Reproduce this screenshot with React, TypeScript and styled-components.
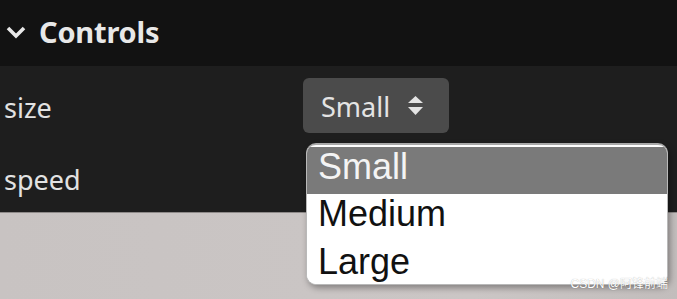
import React from "react";
import styled, { createGlobalStyle } from "styled-components";

const GlobalStyle = createGlobalStyle`
  html, body {
    margin: 0;
    padding: 0;
    background: #c9c4c3;
    overflow: hidden;
  }
  body {
    font-family: "Noto Sans", "Open Sans", sans-serif;
  }
`;

const Page = styled.div`
  width: 677px;
  height: 299px;
  position: relative;
  display: flex;
  flex-direction: column;
  background: linear-gradient(90deg, #c8c3c2 0%, #cbc6c5 70%, #c2bdbc 100%);
`;

const Header = styled.div`
  height: 66px;
  background: #121212;
  display: flex;
  align-items: center;
  gap: 12px;
  padding: 0 0 3px 5px;
  box-sizing: border-box;
  color: #e8e8e8;
`;

const Title = styled.span`
  font-size: 29px;
  font-weight: 700;
  letter-spacing: -0.2px;
`;

const Panel = styled.div`
  background: #1e1e1e;
  padding: 12px 0 7px 4px;
  display: flex;
  flex-direction: column;
  gap: 17px;
  border-bottom: 1px solid #8e8a89;
`;

const Row = styled.div`
  height: 55px;
  display: grid;
  grid-template-columns: 299px 1fr;
  align-items: center;
`;

const Label = styled.span`
  font-size: 27px;
  color: #e2e2e2;
  padding-top: 4px;
`;

const SelectWrap = styled.div`
  position: relative;
  height: 55px;
`;

const SelectButton = styled.div`
  width: 146px;
  height: 55px;
  box-sizing: border-box;
  border-radius: 6px;
  background: #4b4b4b;
  display: flex;
  align-items: center;
  padding: 2px 0 0 18px;
  gap: 17px;
  color: #e4e4e4;
  font-size: 27px;

  svg {
    margin-top: -2px;
  }
`;

const Dropdown = styled.ul`
  position: absolute;
  top: 65px;
  left: 3px;
  width: 362px;
  margin: 0;
  padding: 2px 0 0;
  list-style: none;
  background: #fff;
  border: 1px solid #b9b9b9;
  border-top: 2px solid #a9a9a9;
  border-radius: 10px;
  overflow: hidden;
  box-sizing: border-box;
  box-shadow: 2px 3px 6px rgba(0, 0, 0, 0.35);
  font-family: "Liberation Sans", Arial, sans-serif;
  z-index: 2;
`;

const Option = styled.li<{ $active?: boolean }>`
  height: ${(p) => (p.$active ? 47 : 45)}px;
  line-height: ${(p) => (p.$active ? 40 : 42)}px;
  padding-left: 11px;
  font-size: 36px;
  color: ${(p) => (p.$active ? "#f4f4f4" : "#111")};
  background: ${(p) => (p.$active ? "#7a7a7a" : "#fff")};

  & + & {
    line-height: 40px;
  }
  & + & + & {
    line-height: 46px;
  }
`;

const Watermark = styled.span`
  position: absolute;
  right: 9px;
  bottom: 8px;
  font-size: 12px;
  color: #ffffff;
  text-shadow: 0 0 1px rgba(0, 0, 0, 0.35);
  font-family: "Liberation Sans", "Noto Sans CJK SC", sans-serif;
  z-index: 3;
`;

const Chevron = () => (
  <svg width="22" height="14" viewBox="0 0 22 14">
    <path d="M3 3l8 8 8-8" fill="none" stroke="#e8e8e8" strokeWidth="3.6" />
  </svg>
);

const Updown = () => (
  <svg width="17" height="21" viewBox="0 0 17 21">
    <path d="M8.5 1L16 8H1z" fill="#e4e4e4" />
    <path d="M1 12h15l-7.5 8z" fill="#e4e4e4" />
  </svg>
);

export default function App() {
  return (
    <>
      <GlobalStyle />
      <Page>
        <Header>
          <Chevron />
          <Title>Controls</Title>
        </Header>
        <Panel>
          <Row>
            <Label>size</Label>
            <SelectWrap>
              <SelectButton>
                <span>Small</span>
                <Updown />
              </SelectButton>
              <Dropdown>
                <Option $active>Small</Option>
                <Option>Medium</Option>
                <Option>Large</Option>
              </Dropdown>
            </SelectWrap>
          </Row>
          <Row>
            <Label>speed</Label>
          </Row>
        </Panel>
        <Watermark>CSDN @阿锋前端</Watermark>
      </Page>
    </>
  );
}
